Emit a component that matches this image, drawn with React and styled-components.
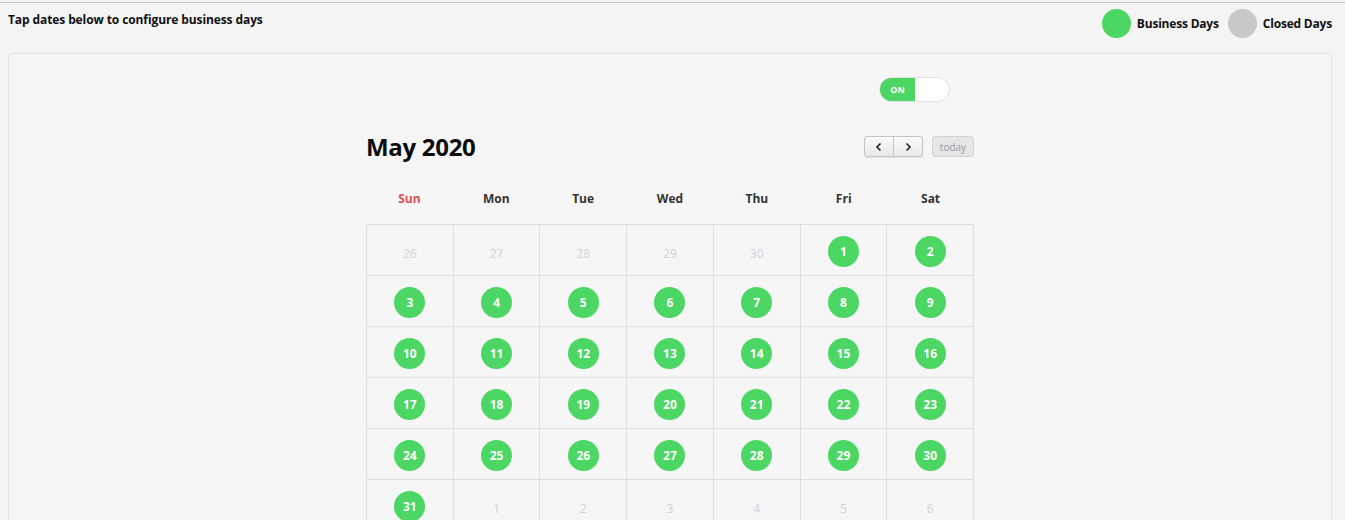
import React, { useState } from "react";
import styled, { createGlobalStyle } from "styled-components";

const GlobalStyle = createGlobalStyle`
  html, body {
    margin: 0;
    padding: 0;
    background: #f4f4f4;
    font-family: "Open Sans", "Noto Sans", sans-serif;
    color: #111;
  }
`;

const Page = styled.div`
  margin-top: 2px;
  border-top: 1px solid #c9c9c9;
  min-height: 517px;
`;

const TopBar = styled.div`
  display: flex;
  align-items: center;
  justify-content: space-between;
  height: 40px;
  padding: 0 13px 0 8px;
`;

const Hint = styled.div`
  font-size: 12px;
  font-weight: 700;
  align-self: flex-start;
  padding-top: 8px;
  letter-spacing: -0.1px;
`;

const Legend = styled.div`
  display: flex;
  align-items: center;
  gap: 6px;
`;

const LegendDot = styled.span`
  width: 29px;
  height: 29px;
  border-radius: 50%;
  background: ${(p) => p.color};
  margin-left: ${(p) => (p.first ? "0" : "3px")};
`;

const LegendLabel = styled.span`
  font-size: 12px;
  font-weight: 700;
  letter-spacing: -0.2px;
`;

const Panel = styled.div`
  margin: 10px 13px 0 8px;
  background: #f6f6f6;
  border: 1px solid #e3e3e3;
  border-radius: 4px;
  min-height: 480px;
  display: flex;
  flex-direction: column;
  align-items: center;
`;

const Calendar = styled.div`
  width: 608px;
`;

const ToggleRow = styled.div`
  display: flex;
  justify-content: flex-end;
  padding: 23px 24px 0 0;
`;

const Toggle = styled.button`
  display: flex;
  width: 71px;
  height: 25px;
  padding: 0;
  border: 1px solid #e2e2e2;
  border-radius: 13px;
  background: #fff;
  overflow: hidden;
  cursor: pointer;
`;

const ToggleOn = styled.span`
  width: 35px;
  height: 100%;
  background: ${(p) => (p.on ? "#4cd663" : "#c8c8c8")};
  color: #fff;
  font-size: 9px;
  font-weight: 700;
  display: flex;
  align-items: center;
  justify-content: center;
  font-family: "Open Sans", sans-serif;
`;

const TitleRow = styled.div`
  display: flex;
  align-items: flex-start;
  justify-content: space-between;
  margin-top: 30px;
  height: 48px;
`;

const Title = styled.h2`
  margin: 0;
  margin-top: -2px;
  font-size: 24px;
  font-weight: 700;
  letter-spacing: -0.3px;
  color: #0c0c0c;
`;

const NavGroup = styled.div`
  display: flex;
  align-items: center;
  gap: 9px;
  margin-top: 4px;
`;

const ButtonPair = styled.div`
  display: flex;
`;

const NavButton = styled.button`
  width: 30px;
  height: 21px;
  padding: 0;
  display: flex;
  align-items: center;
  justify-content: center;
  border: 1px solid #c4c4c4;
  border-radius: ${(p) => (p.side === "left" ? "3px 0 0 3px" : "0 3px 3px 0")};
  margin-left: ${(p) => (p.side === "left" ? "0" : "-1px")};
  background: linear-gradient(#fbfbfb, #e8e8e8);
  box-shadow: 0 1px 1px rgba(0, 0, 0, 0.08);
  cursor: pointer;
`;

const TodayButton = styled.button`
  width: 42px;
  height: 21px;
  padding: 0;
  border: 1px solid #d2d2d2;
  border-radius: 3px;
  background: #e6e6e6;
  color: #9a9a9a;
  font-size: 10px;
  font-family: "Open Sans", sans-serif;
`;

const Weekdays = styled.div`
  display: grid;
  grid-template-columns: repeat(7, 1fr);
  height: 44px;
`;

const Weekday = styled.div`
  text-align: center;
  font-size: 12px;
  font-weight: 700;
  padding-top: 10px;
  color: ${(p) => (p.sunday ? "#d9534f" : "#333")};
`;

const Grid = styled.div`
  display: grid;
  grid-template-columns: repeat(7, 1fr);
  border-top: 1px solid #dedede;
  border-left: 1px solid #dedede;
`;

const Cell = styled.div`
  height: 51px;
  border-right: 1px solid #dedede;
  border-bottom: 1px solid #dedede;
  display: flex;
  align-items: center;
  justify-content: center;
  padding-top: 4px;
  box-sizing: border-box;
  cursor: pointer;
`;

const Faded = styled.span`
  font-size: 12px;
  color: #d2d2d2;
  margin-top: 3px;
`;

const DayDot = styled.span`
  width: 31px;
  height: 31px;
  border-radius: 50%;
  background: ${(p) => (p.open ? "#4cd663" : "#c8c8c8")};
  color: #fff;
  font-size: 12px;
  font-weight: 700;
  display: flex;
  align-items: center;
  justify-content: center;
  margin-top: -1px;
`;

const Chevron = ({ dir }) => (
  <svg width="8" height="10" viewBox="0 0 8 10">
    <path
      d={dir === "left" ? "M5.5 1.5 L2 5 L5.5 8.5" : "M2.5 1.5 L6 5 L2.5 8.5"}
      fill="none"
      stroke="#222"
      strokeWidth="1.6"
    />
  </svg>
);

const weekdays = ["Sun", "Mon", "Tue", "Wed", "Thu", "Fri", "Sat"];

// May 2020 starts on a Friday, padded with April/June days
const buildDays = () => {
  const days = [];
  for (let d = 26; d <= 30; d++) days.push({ n: d, other: true });
  for (let d = 1; d <= 31; d++) days.push({ n: d, other: false });
  for (let d = 1; d <= 6; d++) days.push({ n: d, other: true });
  return days;
};

const App = () => {
  const [on, setOn] = useState(true);
  const [closed, setClosed] = useState({});

  const toggleDay = (n) => setClosed((c) => ({ ...c, [n]: !c[n] }));

  return (
    <>
      <GlobalStyle />
      <Page>
        <TopBar>
          <Hint>Tap dates below to configure business days</Hint>
          <Legend>
            <LegendDot first color="#4cd663" />
            <LegendLabel>Business Days</LegendLabel>
            <LegendDot color="#c8c8c8" />
            <LegendLabel>Closed Days</LegendLabel>
          </Legend>
        </TopBar>
        <Panel>
          <Calendar>
            <ToggleRow>
              <Toggle onClick={() => setOn(!on)}>
                <ToggleOn on={on}>{on ? "ON" : "OFF"}</ToggleOn>
              </Toggle>
            </ToggleRow>
            <TitleRow>
              <Title>May 2020</Title>
              <NavGroup>
                <ButtonPair>
                  <NavButton side="left"><Chevron dir="left" /></NavButton>
                  <NavButton side="right"><Chevron dir="right" /></NavButton>
                </ButtonPair>
                <TodayButton disabled>today</TodayButton>
              </NavGroup>
            </TitleRow>
            <Weekdays>
              {weekdays.map((w, i) => (
                <Weekday key={w} sunday={i === 0}>{w}</Weekday>
              ))}
            </Weekdays>
            <Grid>
              {buildDays().map((d, i) => (
                <Cell key={i} onClick={() => !d.other && toggleDay(d.n)}>
                  {d.other ? (
                    <Faded>{d.n}</Faded>
                  ) : (
                    <DayDot open={!closed[d.n]}>{d.n}</DayDot>
                  )}
                </Cell>
              ))}
            </Grid>
          </Calendar>
        </Panel>
      </Page>
    </>
  );
};

export default App;
